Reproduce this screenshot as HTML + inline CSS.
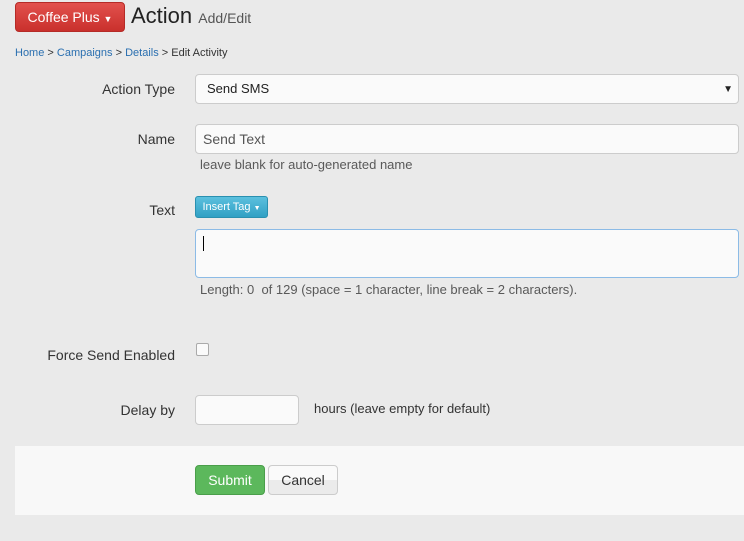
<!DOCTYPE html>
<html><head><style>
body{margin:0;width:744px;height:541px;background:#eaeaea;font-family:"Liberation Sans",sans-serif;color:#333;position:relative;overflow:hidden}
.a{position:absolute}
.lbl{font-size:14px;color:#333;text-align:right;width:175px;left:0}
.inp{background:#fafafa;border:1px solid #ccc;border-radius:4px;box-sizing:border-box}
.help{font-size:13px;color:#595959}
</style></head><body>
<div class="a" style="left:15px;top:2px;width:110px;height:30px;background:linear-gradient(#e2514d,#c9302c);border:1px solid #b52b27;border-radius:4px;box-sizing:border-box;color:#fff;font-size:14px;line-height:28px;text-align:center">Coffee Plus <span style="font-size:9px">▼</span></div>
<div class="a" style="left:131px;top:3px;font-size:22px;color:#222">Action <span style="font-size:14px;color:#555">Add/Edit</span></div>
<div class="a" style="left:15px;top:47px;font-size:11px;color:#333"><span style="color:#2a6fb0">Home</span> &gt; <span style="color:#2a6fb0">Campaigns</span> &gt; <span style="color:#2a6fb0">Details</span> &gt; Edit Activity</div>

<div class="a lbl" style="top:81px">Action Type</div>
<div class="a inp" style="left:195px;top:74px;width:544px;height:30px;font-size:13px;line-height:28px;padding-left:11px;color:#222">Send SMS<span style="position:absolute;right:5px;top:1px;font-size:10px">▼</span></div>

<div class="a lbl" style="top:131px">Name</div>
<div class="a inp" style="left:195px;top:124px;width:544px;height:30px;font-size:14px;line-height:28px;padding-left:7px;color:#555">Send Text</div>
<div class="a help" style="left:200px;top:157px">leave blank for auto-generated name</div>

<div class="a lbl" style="top:202px">Text</div>
<div class="a" style="left:195px;top:196px;width:73px;height:22px;background:linear-gradient(#5bc0de,#31a0c4);border:1px solid #2a90b0;border-radius:3px;box-sizing:border-box;color:#fff;font-size:11px;line-height:20px;text-align:center">Insert Tag <span style="font-size:7px">▼</span></div>
<div class="a inp" style="left:195px;top:229px;width:544px;height:49px;border-color:#8cbbe6"><div style="position:absolute;left:7px;top:6px;width:1px;height:15px;background:#000"></div></div>
<div class="a help" style="left:200px;top:282px">Length: 0&nbsp; of 129 (space = 1 character, line break = 2 characters).</div>

<div class="a lbl" style="top:347px">Force Send Enabled</div>
<div class="a" style="left:196px;top:343px;width:13px;height:13px;background:#fafafa;border:1px solid #aaa;border-radius:2px;box-sizing:border-box"></div>

<div class="a lbl" style="top:402px">Delay by</div>
<div class="a inp" style="left:195px;top:395px;width:104px;height:30px"></div>
<div class="a" style="left:314px;top:401px;font-size:13px;color:#333">hours (leave empty for default)</div>

<div class="a" style="left:15px;top:446px;width:729px;height:69px;background:#f8f8f8"></div>
<div class="a" style="left:195px;top:465px;width:70px;height:30px;background:#5cb85c;border:1px solid #4a9e4a;border-radius:4px;box-sizing:border-box;color:#fff;font-size:14px;line-height:28px;text-align:center">Submit</div>
<div class="a" style="left:268px;top:465px;width:70px;height:30px;background:linear-gradient(#fafafa 50%,#ebebeb 50%);border:1px solid #ccc;border-radius:4px;box-sizing:border-box;color:#333;font-size:14px;line-height:28px;text-align:center">Cancel</div>
</body></html>
